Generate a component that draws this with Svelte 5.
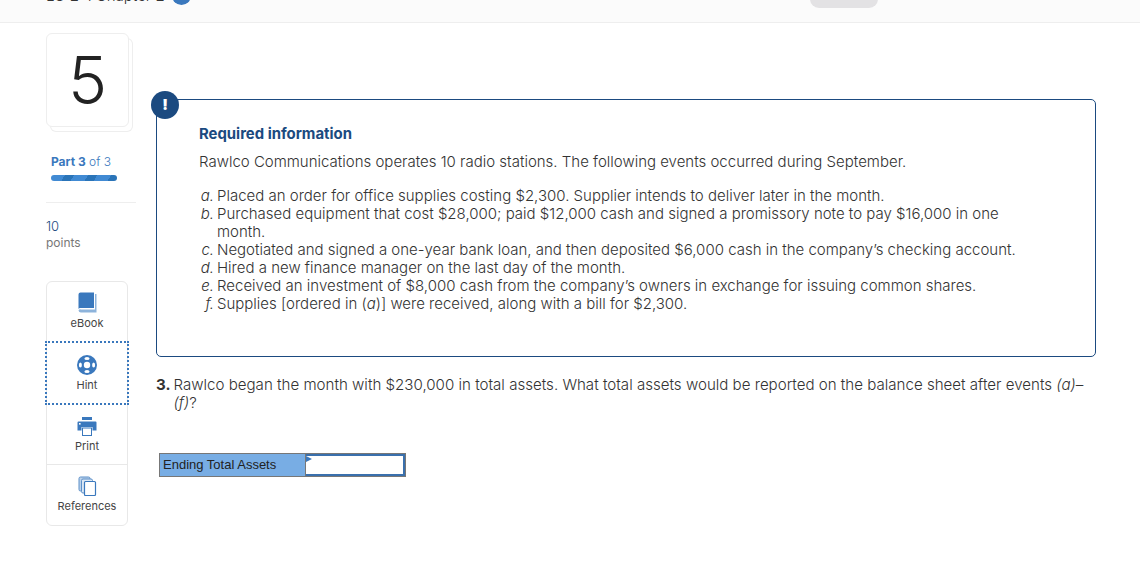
<script lang="ts">
  const events = [
    { key: 'a.', text: 'Placed an order for office supplies costing $2,300. Supplier intends to deliver later in the month.' },
    { key: 'b.', text: 'Purchased equipment that cost $28,000; paid $12,000 cash and signed a promissory note to pay $16,000 in one month.' },
    { key: 'c.', text: 'Negotiated and signed a one-year bank loan, and then deposited $6,000 cash in the company’s checking account.' },
    { key: 'd.', text: 'Hired a new finance manager on the last day of the month.' },
    { key: 'e.', text: 'Received an investment of $8,000 cash from the company’s owners in exchange for issuing common shares.' }
  ];
</script>

<header class="topbar">
  <div class="crumb">
    <span class="crumb-text">LO 2-1 Chapter 2</span>
    <span class="crumb-dot">i</span>
  </div>
  <div class="pill"></div>
</header>

<div class="page">
  <aside class="side">
    <div class="number-card"><span>5</span></div>

    <div class="part">
      <div class="part-label"><b>Part 3</b> of 3</div>
      <div class="part-bar"></div>
    </div>

    <div class="points">
      <div class="points-num">10</div>
      <div class="points-label">points</div>
    </div>

    <nav class="tools">
      <div class="tool ebook">
        <svg width="19" height="21" viewBox="0 0 19 21">
          <path d="M0.5 2.5 A2 2 0 0 1 2.5 0.5 H16 V16 H2.5 A2 2 0 0 0 0.5 17 Z" fill="#3a78bd" />
          <path d="M17 2 H18.5 V20.5 H3 A2.5 2.5 0 0 1 0.5 18.5 A2 2 0 0 1 3 17.5 H17 Z" fill="#8db3db" />
        </svg>
        <span>eBook</span>
      </div>
      <div class="tool hint">
        <svg width="20" height="20" viewBox="0 0 20 20">
          <circle cx="10" cy="10" r="10" fill="#3a78bd" />
          <circle cx="10" cy="10" r="3.2" fill="#fff" />
          <ellipse cx="10" cy="3.4" rx="2.6" ry="1.5" fill="#fff" />
          <ellipse cx="10" cy="16.6" rx="2.6" ry="1.5" fill="#fff" />
          <ellipse cx="3.4" cy="10" rx="1.5" ry="2.6" fill="#fff" />
          <ellipse cx="16.6" cy="10" rx="1.5" ry="2.6" fill="#fff" />
        </svg>
        <span>Hint</span>
      </div>
      <div class="tool print">
        <svg width="20" height="19" viewBox="0 0 20 19">
          <rect x="5" y="0" width="10" height="3" fill="#3a78bd" />
          <path d="M1.5 4.5 H18.5 A1 1 0 0 1 19.5 5.5 V13.5 H15.5 V10 H4.5 V13.5 H0.5 V5.5 A1 1 0 0 1 1.5 4.5 Z" fill="#3a78bd" />
          <rect x="5.5" y="11" width="9" height="7.5" fill="#fff" stroke="#3a78bd" />
          <rect x="2" y="6" width="1.6" height="1.6" fill="#fff" />
        </svg>
        <span>Print</span>
      </div>
      <div class="tool refs">
        <svg width="19" height="20" viewBox="0 0 19 20">
          <rect x="1" y="1" width="11" height="14" rx="1.5" fill="#bcd2ea" stroke="#5d90c9" />
          <rect x="3.5" y="3" width="11" height="14" rx="1.5" fill="#dbe7f4" stroke="#5d90c9" />
          <rect x="6.5" y="5.5" width="11" height="14" rx="1" fill="#fff" stroke="#3a78bd" stroke-width="1.2" />
        </svg>
        <span>References</span>
      </div>
    </nav>
  </aside>

  <main class="content">
    <section class="required">
      <div class="bang">!</div>
      <h2>Required information</h2>
      <p class="lead">Rawlco Communications operates 10 radio stations. The following events occurred during September.</p>
      <ul class="events">
        {#each events as ev}
          <li><i>{ev.key}</i><span>{ev.text}</span></li>
        {/each}
        <li><i>f.</i><span>Supplies [ordered in (<i class="inline">a</i>)] were received, along with a bill for $2,300.</span></li>
      </ul>
    </section>

    <div class="question">
      <b>3.</b>
      <span>Rawlco began the month with $230,000 in total assets. What total assets would be reported on the balance sheet after events <i>(a)</i>–<i>(f)</i>?</span>
    </div>

    <div class="answer">
      <div class="answer-label">Ending Total Assets</div>
      <div class="answer-input"></div>
    </div>
  </main>
</div>

<style>
  :global(body) {
    margin: 0;
    background: #fff;
    font-family: Inter, "Open Sans", sans-serif;
    font-weight: 300;
    color: #333;
  }

  .topbar {
    height: 22px;
    background: #fbfbfb;
    border-bottom: 1px solid #eee;
    position: relative;
    overflow: hidden;
  }

  .crumb {
    position: absolute;
    left: 46px;
    top: -14px;
    display: flex;
    align-items: center;
    gap: 7px;
    font-size: 15px;
    color: #333;
  }

  .crumb-dot {
    width: 19px;
    height: 19px;
    border-radius: 50%;
    background: #3a78bd;
    color: #fff;
    font-size: 12px;
    font-weight: 700;
    text-align: center;
    line-height: 19px;
  }

  .pill {
    position: absolute;
    left: 810px;
    top: -10px;
    width: 68px;
    height: 18px;
    border-radius: 9px;
    background: #e3e2e4;
  }

  .page {
    display: grid;
    grid-template-columns: 90px 940px;
    column-gap: 20px;
    padding: 10px 0 0 46px;
  }

  .number-card {
    width: 81px;
    height: 92px;
    border: 1px solid #eee;
    border-radius: 6px;
    background: #fff;
    box-shadow: 4px 5px 0 -1px #fff, 4px 5px 0 0 #eee;
    display: flex;
    align-items: center;
    justify-content: center;
    font-size: 66px;
    font-weight: 300;
    color: #222;
  }

  .part {
    margin: 27px 0 0 5px;
    padding-bottom: 21px;
    font-size: 12px;
    line-height: 15px;
    color: #3a78bd;
  }

  .part-label b {
    font-weight: 700;
  }

  .part-bar {
    width: 66px;
    height: 6px;
    margin-top: 6px;
    border-radius: 3px;
    background: repeating-linear-gradient(120deg, #418ad3 0 12px, #2a74b8 12px 20px);
  }

  .points {
    border-top: 1px solid #eee;
    padding-top: 15px;
    width: 90px;
  }

  .points-num {
    font-size: 13px;
    font-weight: 300;
    color: #1b4a80;
  }

  .points-label {
    font-size: 12px;
    font-weight: 400;
    color: #777;
    margin-top: 1px;
  }

  .tools {
    margin-top: 31px;
    width: 82px;
    border: 1px solid #e8e8e8;
    border-radius: 6px;
    box-sizing: border-box;
    display: flex;
    flex-direction: column;
  }

  .tool {
    height: 60px;
    display: flex;
    flex-direction: column;
    align-items: center;
    justify-content: flex-end;
    gap: 3px;
    padding-bottom: 12px;
    box-sizing: border-box;
    font-size: 11px;
    font-weight: 400;
    color: #444;
  }

  .hint {
    outline: 2px dotted #3a78bd;
    outline-offset: -1px;
    margin: 0 -1px;
    height: 62px;
    padding-bottom: 12px;
  }

  .print {
    height: 61px;
    padding-bottom: 11px;
    border-bottom: 1px solid #e8e8e8;
  }

  .required {
    position: relative;
    margin-top: 66px;
    height: 258px;
    box-sizing: border-box;
    border: 1px solid #1b4a80;
    border-radius: 5px;
    padding: 24px 61px 0 42px;
  }

  .bang {
    position: absolute;
    left: -6px;
    top: -9px;
    width: 28px;
    height: 28px;
    border-radius: 50%;
    background: #1b4a80;
    color: #fff;
    font-weight: 900;
    font-size: 15px;
    text-align: center;
    line-height: 28px;
  }

  h2 {
    margin: 0;
    font-size: 14.9px;
    font-weight: 700;
    color: #1b4a80;
    line-height: 20px;
  }

  .lead {
    margin: 8px 0 0;
    font-size: 15px;
    line-height: 20px;
  }

  .events {
    list-style: none;
    margin: 15px 0 0;
    padding: 0;
    font-size: 15px;
    line-height: 18px;
  }

  .events li {
    display: flex;
  }

  .events li > i {
    width: 18px;
    flex: none;
    text-align: right;
    padding-right: 3px;
    box-sizing: border-box;
  }

  .question {
    margin-top: 19px;
    display: flex;
    gap: 3px;
    font-size: 15.1px;
    line-height: 18px;
  }

  .question b {
    font-weight: 700;
  }

  .answer {
    margin-top: 41px;
    margin-left: 3px;
    width: 247px;
    height: 24px;
    display: flex;
    box-sizing: border-box;
    border: 1px solid #777;
  }

  .answer-label {
    width: 146px;
    background: #78ade4;
    font-family: "Liberation Sans", sans-serif;
    font-weight: 400;
    font-size: 13px;
    color: #222;
    line-height: 21px;
    padding-left: 3px;
    box-sizing: border-box;
    border-right: 1px solid #777;
  }

  .answer-input {
    flex: 1;
    position: relative;
    border: 2px solid #3a70ad;
    border-left: 0;
    background: #fff;
  }

  .answer-input::before {
    content: "";
    position: absolute;
    left: 0;
    top: 0;
    border-left: 6px solid #3a78bd;
    border-top: 3px solid transparent;
    border-bottom: 3px solid transparent;
  }
</style>
